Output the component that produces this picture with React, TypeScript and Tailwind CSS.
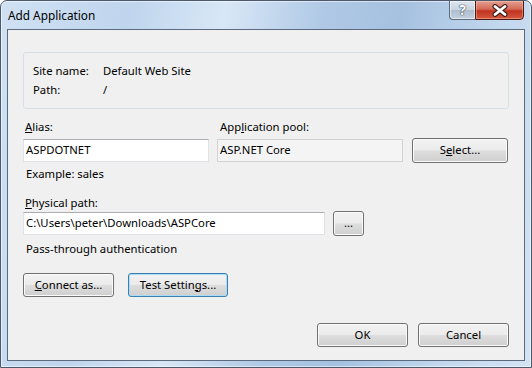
import React from 'react'

const font = { fontFamily: '"Noto Sans", "Open Sans", sans-serif' }

function Btn({
  children,
  w,
  h = 'h-[24px]',
  focused = false,
}: {
  children: React.ReactNode
  w: string
  h?: string
  focused?: boolean
}) {
  return (
    <div
      className={`${w} ${h} flex items-center justify-center rounded-[3px] border text-[11.3px] text-black bg-[linear-gradient(to_bottom,#f2f2f2_0%,#ebebeb_48%,#dddddd_52%,#cfcfcf_100%)] ${
        focused
          ? 'border-[#3c7fb1] shadow-[inset_0_0_0_1px_#a9dcf6]'
          : 'border-[#707070] shadow-[inset_0_0_0_1px_#fbfbfb]'
      }`}
    >
      {children}
    </div>
  )
}

function TextBox({ value, w, disabled = false }: { value: string; w: string; disabled?: boolean }) {
  return (
    <div
      className={`${w} h-[23px] flex items-center pl-[2px] border text-[11.3px] text-black ${
        disabled
          ? 'bg-[#f4f4f4] border-[#d2d2d2]'
          : 'bg-white border-[#dfe3e8] border-t-[#abadb3]'
      }`}
    >
      {value}
    </div>
  )
}

export default function App() {
  return (
    <div
      className="w-[532px] h-[368px] flex flex-col rounded-t-[7px] border border-[#4a5a6c] bg-[linear-gradient(100deg,#d0e1f3_0%,#bfd5ed_22%,#d8e7f6_38%,#aec8e5_55%,#a6c1e0_68%,#c3d8ee_85%,#d2e3f4_100%)] shadow-[inset_0_0_0_1px_rgba(255,255,255,0.55)] overflow-hidden"
      style={font}
    >
      {/* title bar */}
      <div className="h-[28px] flex items-start pl-[7px] pr-[7px]">
        <div className="pt-[6px] text-[11.8px] leading-[16px] text-black">Add Application</div>
        <div className="ml-auto -mt-px flex">
          <div className="w-[26px] h-[20px] flex items-center justify-center rounded-bl-[4px] border border-r-0 border-[#5d6c7c] bg-[linear-gradient(to_bottom,#dde6ef_0%,#c8d4e1_48%,#aebdcd_52%,#c4d1de_100%)] shadow-[inset_0_0_0_1px_rgba(255,255,255,0.5)]">
            <span
              className="text-[14px] font-bold leading-none text-white"
              style={{ textShadow: '0 0 1px #39475a, 0 0 1px #39475a, 0 0 1px #39475a' }}
            >
              ?
            </span>
          </div>
          <div className="w-[49px] h-[20px] flex items-center justify-center rounded-br-[4px] border border-[#4a1a12] bg-[linear-gradient(to_bottom,#e4a092_0%,#d46a58_45%,#c0321f_55%,#d65a3f_100%)] shadow-[inset_0_0_0_1px_rgba(255,210,200,0.4)]">
            <svg width="18" height="13" viewBox="0 0 18 13">
              <path d="M4 2.5 L14 10.5 M14 2.5 L4 10.5" stroke="#3f231e" strokeWidth="5" strokeLinecap="round" />
              <path d="M4 2.5 L14 10.5 M14 2.5 L4 10.5" stroke="#ffffff" strokeWidth="2.8" strokeLinecap="round" />
            </svg>
          </div>
        </div>
      </div>

      {/* client area */}
      <div className="mx-[6px] mb-[6px] h-[332px] border border-[#5b6b7d] bg-[#f0f0f0] px-[15px] text-[11.3px] text-black">
        <div className="mt-[22px] h-[57px] rounded-[3px] border border-[#d5dfe5] pl-[9px] pt-[8px] leading-[19px]">
          <div className="flex">
            <div className="w-[70px]">Site name:</div>
            <div>Default Web Site</div>
          </div>
          <div className="flex">
            <div className="w-[70px]">Path:</div>
            <div>/</div>
          </div>
        </div>

        <div className="mt-[10px] flex items-end">
          <div className="w-[186px]">
            <div className="pl-[2px] leading-[16px]">
              <span className="underline">A</span>lias:
            </div>
            <div className="mt-[4px]">
              <TextBox value="ASPDOTNET" w="w-[186px]" />
            </div>
          </div>
          <div className="ml-[8px] w-[186px]">
            <div className="pl-[3px] leading-[16px]">
              App<span className="underline">l</span>ication pool:
            </div>
            <div className="mt-[4px]">
              <TextBox value="ASP.NET Core" w="w-[186px]" disabled />
            </div>
          </div>
          <div className="ml-[9px] mb-[-1px]">
            <Btn w="w-[96px]" h="h-[25px]">
              S<span className="underline">e</span>lect...
            </Btn>
          </div>
        </div>

        <div className="mt-[4px] pl-[3px] leading-[16px]">Example: sales</div>

        <div className="mt-[13px] pl-[2px] leading-[16px]">
          <span className="underline">P</span>hysical path:
        </div>
        <div className="flex items-center">
          <TextBox value="C:\Users\peter\Downloads\ASPCore" w="w-[302px]" />
          <div className="ml-[8px]">
            <Btn w="w-[31px]" h="h-[25px]">
              ...
            </Btn>
          </div>
        </div>

        <div className="mt-[5px] pl-[3px] leading-[16px]">Pass-through authentication</div>

        <div className="mt-[16px] flex gap-[14px]">
          <Btn w="w-[91px]">
            <span className="underline">C</span>onnect as...
          </Btn>
          <Btn w="w-[100px]" focused>
            Test Settin<span className="underline">g</span>s...
          </Btn>
        </div>

        <div className="mt-[26px] flex justify-end gap-[10px]">
          <Btn w="w-[91px]">OK</Btn>
          <Btn w="w-[91px]">Cancel</Btn>
        </div>
      </div>
    </div>
  )
}
